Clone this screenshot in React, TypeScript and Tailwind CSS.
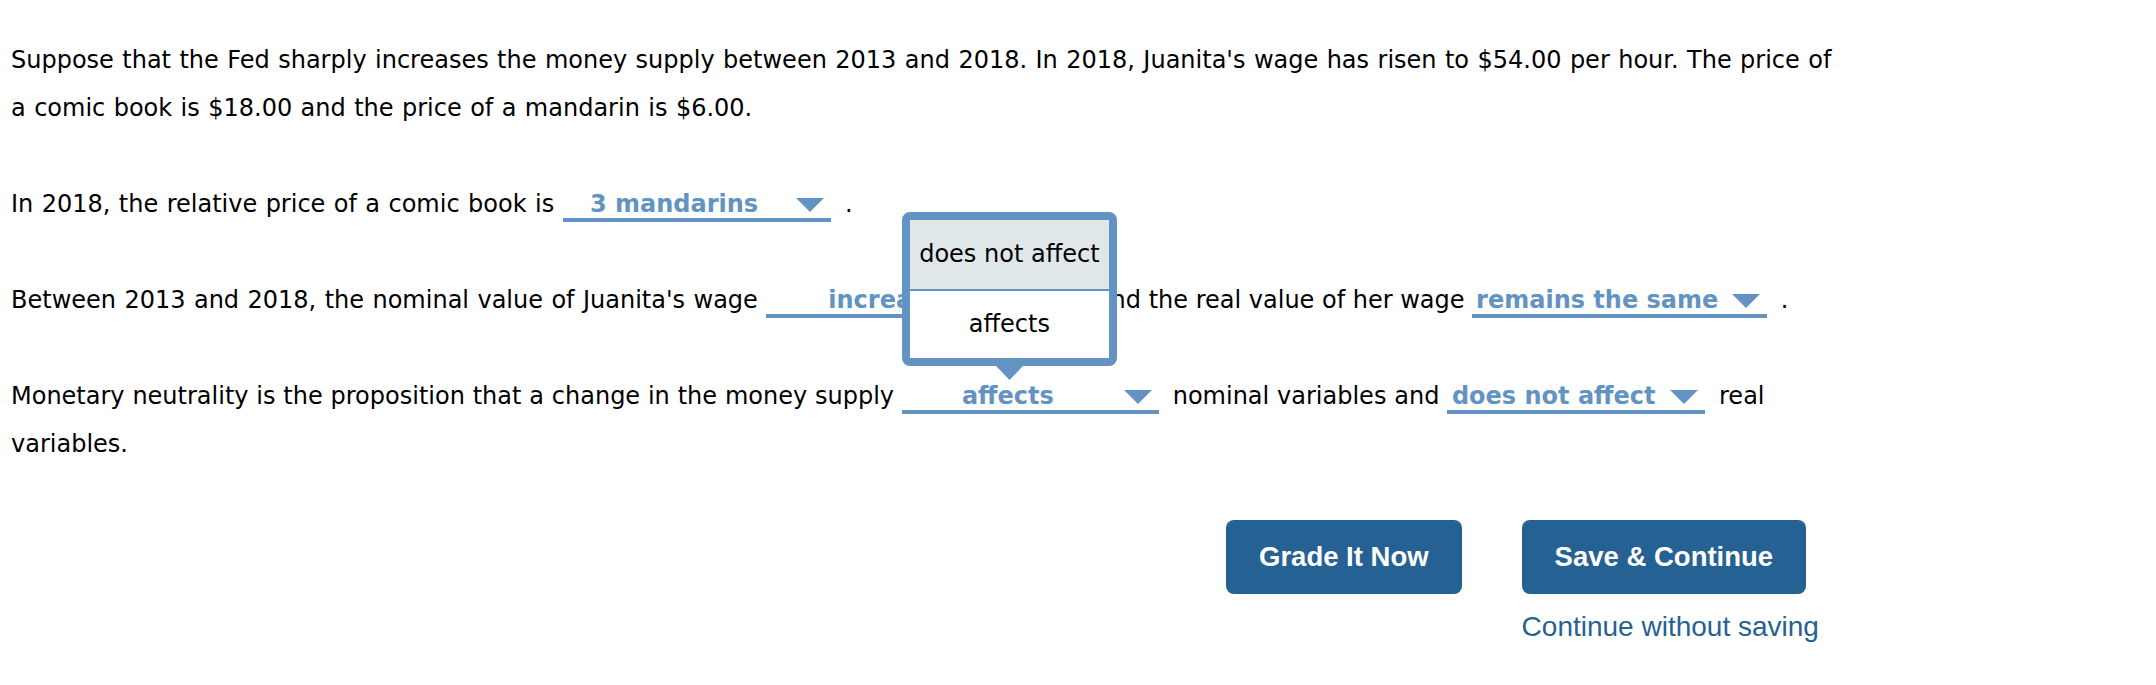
import React from "react";

const BLUE = "#6293c3";

function Arrow() {
  return (
    <svg className="ml-[10px] mr-[7px] mb-[2px] shrink-0" width="28" height="14" viewBox="0 0 28 14">
      <polygon points="0,0 28,0 14,14" fill={BLUE} />
    </svg>
  );
}

function Dropdown({
  text,
  w,
  textClass = "text-center",
  children,
}: {
  text: string;
  w: string;
  textClass?: string;
  children?: React.ReactNode;
}) {
  return (
    <span
      className={`relative inline-flex items-baseline align-baseline border-b-4 border-[#6293c3] mr-[6px] leading-[27px] font-bold text-[#6293c3] [word-spacing:0px] ${w}`}
    >
      <span className={`flex-1 whitespace-nowrap ${textClass}`}>{text}</span>
      <Arrow />
      {children}
    </span>
  );
}

function Popup() {
  return (
    <div className="absolute left-0 bottom-[calc(100%+3px)] w-[215px] z-10 font-normal text-black">
      <div className="border-[8px] border-[#6293c3] rounded-[8px] bg-white overflow-hidden">
        <div className="h-[69px] bg-[#e0e7ea] flex items-center justify-center whitespace-nowrap">
          does not affect
        </div>
        <div className="h-[2px] bg-[#6293c3]" />
        <div className="h-[67px] bg-white flex items-center justify-center whitespace-nowrap">
          affects
        </div>
      </div>
      <svg className="block mx-auto" width="27" height="14" viewBox="0 0 27 14">
        <polygon points="0,0 27,0 13.5,14" fill={BLUE} />
      </svg>
    </div>
  );
}

export default function App() {
  return (
    <div className="min-h-[685px] w-[2156px] bg-white">
      <div className="pt-[36px] pl-[11px] text-[24px] leading-[48px] text-black font-['DejaVu_Sans',Verdana,sans-serif] whitespace-nowrap">
        <p className="[word-spacing:0.8px]">
          Suppose that the Fed sharply increases the money supply between 2013 and 2018. In 2018, Juanita's wage has
          risen to $54.00 per hour. The price of
          <br />
          a comic book is $18.00 and the price of a mandarin is $6.00.
        </p>
        <p className="mt-[48px] [word-spacing:0.8px]">
          In 2018, the relative price of a comic book is <Dropdown text="3 mandarins" w="w-[268px]" /> .
        </p>
        <p className="mt-[48px]">
          <span className="[word-spacing:0.8px]">Between 2013 and 2018, the nominal value of Juanita's wage </span>
          <Dropdown text="increases" w="w-[316px]" textClass="text-left pl-[62px]" /> and the real value of her wage{" "}
          <Dropdown text="remains the same" w="w-[295px]" /> .
        </p>
        <p className="mt-[48px] [word-spacing:0.2px]">
          Monetary neutrality is the proposition that a change in the money supply{" "}
          <Dropdown text="affects" w="w-[257px]">
            <Popup />
          </Dropdown>{" "}
          nominal variables and <Dropdown text="does not affect" w="w-[258px]" /> real
          <br />
          variables.
        </p>
      </div>

      <div className="mt-[52px] ml-[1226px] flex items-start gap-[60px] font-['Liberation_Sans',Arial,sans-serif]">
        <button className="h-[74px] px-[33px] rounded-[8px] bg-[#266194] text-white font-bold text-[27.5px] leading-none">
          Grade It Now
        </button>
        <div className="flex flex-col items-start">
          <button className="h-[74px] px-[33px] rounded-[8px] bg-[#266194] text-white font-bold text-[27.5px] leading-none">
            Save &amp; Continue
          </button>
          <a className="mt-[17px] text-[28px] leading-[32px] text-[#266194] whitespace-nowrap cursor-pointer">
            Continue without saving
          </a>
        </div>
      </div>
    </div>
  );
}
